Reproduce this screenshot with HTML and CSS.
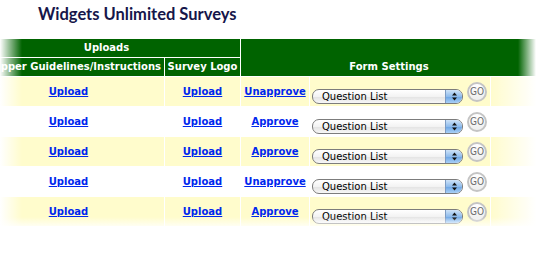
FILE: index.html
```html
<!DOCTYPE html>
<html lang="en">
<head>
    <meta charset="UTF-8">
    <meta name="viewport" content="width=device-width, initial-scale=1.0">
    <title>Widgets Unlimited Surveys</title>
    <link rel="stylesheet" href="styles.css">
</head>
<body>

    <h1 class="page-title">Widgets Unlimited Surveys</h1>

    <div class="sheet">
        <table class="surveys">
            <colgroup>
                <col class="w-guide">
                <col class="w-logo">
                <col class="w-approve">
                <col class="w-form">
                <col class="w-extra">
            </colgroup>
            <tr class="head">
                <th colspan="2">Uploads</th>
                <th colspan="3" rowspan="2" class="form-settings">Form Settings</th>
            </tr>
            <tr class="head">
                <th class="guide-head">pper Guidelines/Instructions</th>
                <th>Survey Logo</th>
            </tr>

            <tr class="row odd">
                <td><a href="#">Upload</a></td>
                <td><a href="#">Upload</a></td>
                <td><a href="#">Unapprove</a></td>
                <td class="form-cell">
                    <div class="form-pick">
                        <span class="picker"><span class="picker-text">Question List</span><span class="picker-btn"><svg width="7" height="9" viewBox="0 0 7 9"><path d="M3.5 0.5 L6 3.5 L1 3.5 Z M3.5 8.5 L6 5.5 L1 5.5 Z" fill="#111"/></svg></span></span>
                        <span class="go-btn">GO</span>
                    </div>
                </td>
                <td></td>
            </tr>
            <tr class="row">
                <td><a href="#">Upload</a></td>
                <td><a href="#">Upload</a></td>
                <td><a href="#">Approve</a></td>
                <td class="form-cell">
                    <div class="form-pick">
                        <span class="picker"><span class="picker-text">Question List</span><span class="picker-btn"><svg width="7" height="9" viewBox="0 0 7 9"><path d="M3.5 0.5 L6 3.5 L1 3.5 Z M3.5 8.5 L6 5.5 L1 5.5 Z" fill="#111"/></svg></span></span>
                        <span class="go-btn">GO</span>
                    </div>
                </td>
                <td></td>
            </tr>
            <tr class="row odd">
                <td><a href="#">Upload</a></td>
                <td><a href="#">Upload</a></td>
                <td><a href="#">Approve</a></td>
                <td class="form-cell">
                    <div class="form-pick">
                        <span class="picker"><span class="picker-text">Question List</span><span class="picker-btn"><svg width="7" height="9" viewBox="0 0 7 9"><path d="M3.5 0.5 L6 3.5 L1 3.5 Z M3.5 8.5 L6 5.5 L1 5.5 Z" fill="#111"/></svg></span></span>
                        <span class="go-btn">GO</span>
                    </div>
                </td>
                <td></td>
            </tr>
            <tr class="row">
                <td><a href="#">Upload</a></td>
                <td><a href="#">Upload</a></td>
                <td><a href="#">Unapprove</a></td>
                <td class="form-cell">
                    <div class="form-pick">
                        <span class="picker"><span class="picker-text">Question List</span><span class="picker-btn"><svg width="7" height="9" viewBox="0 0 7 9"><path d="M3.5 0.5 L6 3.5 L1 3.5 Z M3.5 8.5 L6 5.5 L1 5.5 Z" fill="#111"/></svg></span></span>
                        <span class="go-btn">GO</span>
                    </div>
                </td>
                <td></td>
            </tr>
            <tr class="row odd">
                <td><a href="#">Upload</a></td>
                <td><a href="#">Upload</a></td>
                <td><a href="#">Approve</a></td>
                <td class="form-cell">
                    <div class="form-pick">
                        <span class="picker"><span class="picker-text">Question List</span><span class="picker-btn"><svg width="7" height="9" viewBox="0 0 7 9"><path d="M3.5 0.5 L6 3.5 L1 3.5 Z M3.5 8.5 L6 5.5 L1 5.5 Z" fill="#111"/></svg></span></span>
                        <span class="go-btn">GO</span>
                    </div>
                </td>
                <td></td>
            </tr>
        </table>

        <!-- soft edges of the cropped shot -->
        <div class="fade fade-left"></div>
        <div class="fade fade-right-head"></div>
        <div class="fade fade-right-body"></div>
        <div class="fade fade-bottom"></div>
    </div>

</body>
</html>
```

FILE: styles.css
```css
/* General Styling */
html, body {
    margin: 0;
    overflow: hidden;
    background: #fff;
}

body {
    font-family: "DejaVu Sans", Verdana, sans-serif;
    width: 536px;
    height: 254px;
}

.page-title {
    margin: 0;
    padding: 4px 0 0 38px;
    height: 34px;
    line-height: 20px;
    font-family: Lato, "DejaVu Sans", sans-serif;
    font-size: 16.5px;
    font-weight: bold;
    color: #16164a;
}

.sheet {
    position: relative;
}

/* Table */
.surveys {
    border-collapse: separate;
    border-spacing: 1px;
    table-layout: fixed;
    width: 566px;
    margin-left: -28px;
}

.w-guide { width: 191px; }
.w-logo { width: 75px; }
.w-approve { width: 68px; }
.w-form { width: 180px; }
.w-extra { width: 46px; }

.head th {
    background-color: #006300;
    color: #fff;
    font-size: 10px;
    font-weight: bold;
    height: 18px;
    line-height: 18px;
    padding: 0;
    white-space: nowrap;
    overflow: hidden;
    text-align: center;
}

.head .guide-head {
    text-align: right;
    padding-right: 3px;
}

.head .form-settings {
    vertical-align: bottom;
}

.row td {
    height: 29px;
    padding: 0;
    text-align: center;
    vertical-align: middle;
    font-size: 10px;
}

.row.odd td {
    background-color: #fffccc;
}

.row a {
    color: #0026ee;
    font-weight: bold;
    text-decoration: underline;
}

/* Question list picker + GO */
.row .form-cell {
    vertical-align: top;
    text-align: left;
}

.form-pick {
    display: flex;
    align-items: flex-start;
    padding: 5px 0 0 2px;
}

.picker {
    display: flex;
    width: 151px;
    height: 15px;
    margin-top: 7px;
    box-sizing: border-box;
    border: 1px solid #7c7c7c;
    border-radius: 7px;
    background: linear-gradient(#ffffff, #f3f3f3 50%, #e2e2e2 51%, #f7f7f7);
    overflow: hidden;
}

.picker-text {
    flex: 1;
    padding-left: 9px;
    font-size: 10px;
    line-height: 14px;
    color: #000;
}

.picker-btn {
    width: 16px;
    display: flex;
    align-items: center;
    justify-content: center;
    border-left: 1px solid #7d9bc2;
    background: linear-gradient(#cfe3f8, #8fbcec 50%, #6aa3e3 51%, #a9d0f6);
}

.go-btn {
    width: 20px;
    height: 20px;
    margin-left: 4px;
    box-sizing: border-box;
    border: 2px solid #c4c4c4;
    border-radius: 50%;
    background: linear-gradient(#ffffff, #eeeeee);
    color: #6a6a6a;
    font-size: 10px;
    line-height: 16px;
    text-align: center;
    font-family: "DejaVu Sans Condensed", "DejaVu Sans", sans-serif;
}

/* Faded edges */
.fade {
    position: absolute;
    pointer-events: none;
}

.fade-left {
    left: 0;
    top: 0;
    bottom: 0;
    width: 22px;
    background: linear-gradient(to right, #fff, rgba(255, 255, 255, 0));
}

.fade-right-head {
    right: 0;
    top: 0;
    height: 39px;
    width: 18px;
    background: linear-gradient(to right, rgba(255, 255, 255, 0), #fff);
}

.fade-right-body {
    right: 0;
    top: 39px;
    bottom: 0;
    width: 46px;
    background: linear-gradient(to right, rgba(255, 255, 255, 0), #fff);
}

.fade-bottom {
    left: 0;
    right: 0;
    bottom: -2px;
    height: 12px;
    background: linear-gradient(rgba(255, 255, 255, 0), #fff);
}
```
